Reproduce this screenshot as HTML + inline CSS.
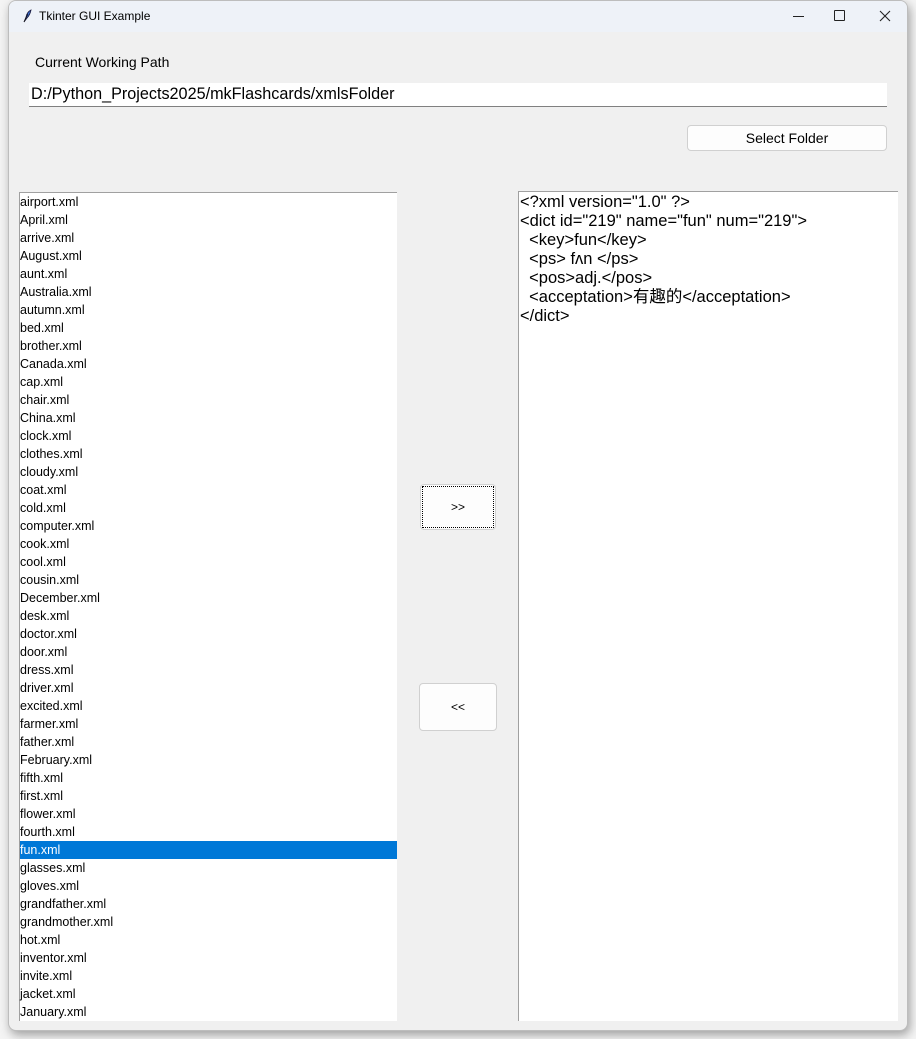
<!DOCTYPE html>
<html><head><meta charset="utf-8"><style>
*{margin:0;padding:0;box-sizing:border-box}
html,body{width:916px;height:1039px;overflow:hidden;background:#f4f4f4;font-family:"Liberation Sans","Noto Sans CJK SC",sans-serif}
.win{position:absolute;left:8px;top:0;width:900px;height:1031px;background:#f0f0f0;border:1px solid #bdbdbd;border-radius:8px;box-shadow:2px 4px 10px rgba(0,0,0,.35);overflow:hidden}
.title{position:absolute;left:0;top:0;width:100%;height:31px;background:#eef2f8}
.title .t{position:absolute;left:30px;top:8px;font-size:12px;color:#000}
.abs{position:absolute}
.entry{left:20px;top:82px;width:858px;height:24px;background:#fff;border-bottom:1px solid #808080;font-size:16.2px;padding:2px 0 0 2px;color:#000}
.btn{background:#fdfdfd;border:1px solid #d0d0d0;border-radius:4px;text-align:center;font-size:14px}
.list{left:10px;top:191px;width:378px;height:829px;background:#fff;border-top:1px solid #a0a0a0;border-left:1px solid #a0a0a0;font-size:12.5px;line-height:18px;padding-top:0}
.list div{padding-left:0;height:18px;white-space:nowrap}
.list .sel{background:#0078d7;color:#fff}
.text{left:509px;top:190px;width:380px;height:830px;background:#fff;border-top:1px solid #a0a0a0;border-left:1px solid #a0a0a0;font-size:16.5px;line-height:19px;padding:1px 0 0 1px;white-space:pre;color:#000}
</style></head><body>
<div class="win">
 <div class="title">
  <svg class="abs" style="left:13px;top:8px" width="10" height="14" viewBox="0 0 10 14"><path d="M2 13 L4 8 Q5 3 9 1 Q8 6 5 9 Z" fill="#3a6fd0" stroke="#1a1a40" stroke-width=".8"/><path d="M2 13 L6 5" stroke="#111" stroke-width=".8"/></svg>
  <span class="t">Tkinter GUI Example</span>
  <div class="abs" style="left:784px;top:15px;width:11px;height:1px;background:#222"></div>
  <div class="abs" style="left:825px;top:9px;width:11px;height:11px;border:1px solid #222;border-radius:1px"></div>
  <svg class="abs" style="left:870px;top:9px" width="12" height="12"><path d="M1 1L11 11M11 1L1 11" stroke="#222" stroke-width="1.1"/></svg>
 </div>
 <div class="abs" style="left:26px;top:53px;font-size:14px">Current Working Path</div>
 <div class="abs entry">D:/Python_Projects2025/mkFlashcards/xmlsFolder</div>
 <div class="abs btn" style="left:678px;top:124px;width:200px;height:26px;line-height:24px">Select Folder</div>
 <div class="abs list">
<div>airport.xml</div><div>April.xml</div><div>arrive.xml</div><div>August.xml</div><div>aunt.xml</div><div>Australia.xml</div><div>autumn.xml</div><div>bed.xml</div><div>brother.xml</div><div>Canada.xml</div><div>cap.xml</div><div>chair.xml</div><div>China.xml</div><div>clock.xml</div><div>clothes.xml</div><div>cloudy.xml</div><div>coat.xml</div><div>cold.xml</div><div>computer.xml</div><div>cook.xml</div><div>cool.xml</div><div>cousin.xml</div><div>December.xml</div><div>desk.xml</div><div>doctor.xml</div><div>door.xml</div><div>dress.xml</div><div>driver.xml</div><div>excited.xml</div><div>farmer.xml</div><div>father.xml</div><div>February.xml</div><div>fifth.xml</div><div>first.xml</div><div>flower.xml</div><div>fourth.xml</div><div class="sel">fun.xml</div><div>glasses.xml</div><div>gloves.xml</div><div>grandfather.xml</div><div>grandmother.xml</div><div>hot.xml</div><div>inventor.xml</div><div>invite.xml</div><div>jacket.xml</div><div>January.xml</div>
 </div>
 <div class="abs btn" style="left:411px;top:483px;width:76px;height:46px;line-height:44px;font-size:12px"><div style="position:absolute;left:1px;top:1px;right:1px;bottom:1px;border:1px dotted #000"></div>&gt;&gt;</div>
 <div class="abs btn" style="left:410px;top:682px;width:78px;height:48px;line-height:46px;font-size:12px">&lt;&lt;</div>
 <div class="abs text">&lt;?xml version="1.0" ?&gt;
&lt;dict id="219" name="fun" num="219"&gt;
  &lt;key&gt;fun&lt;/key&gt;
  &lt;ps&gt; fʌn &lt;/ps&gt;
  &lt;pos&gt;adj.&lt;/pos&gt;
  &lt;acceptation&gt;有趣的&lt;/acceptation&gt;
&lt;/dict&gt;</div>
</div>
</body></html>
